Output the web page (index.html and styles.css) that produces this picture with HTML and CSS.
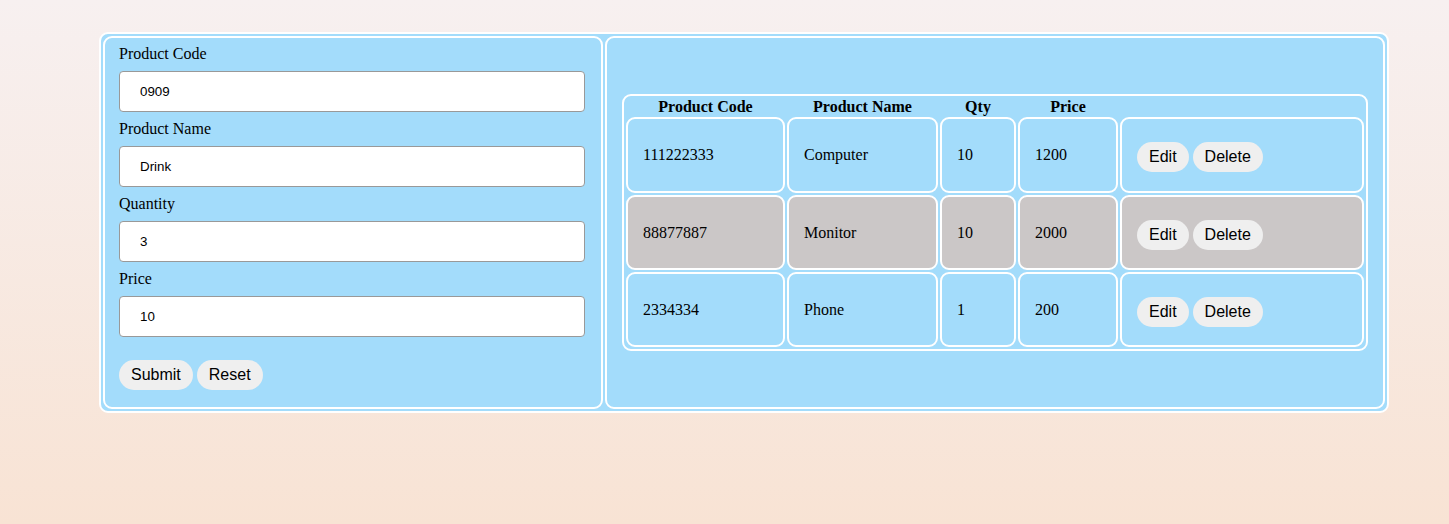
FILE: index.html
```html
<!DOCTYPE html>
<html>
<head>
<meta charset="utf-8">
<title>Products</title>
<link rel="stylesheet" href="styles.css">
</head>
<body>
<div class="wrap">
  <form class="panel form-panel">
    <label class="lbl">Product Code</label>
    <input class="field" type="text" value="0909">
    <label class="lbl">Product Name</label>
    <input class="field" type="text" value="Drink">
    <label class="lbl">Quantity</label>
    <input class="field" type="text" value="3">
    <label class="lbl">Price</label>
    <input class="field" type="text" value="10">
    <div class="actions">
      <button type="button" class="btn">Submit</button>
      <button type="button" class="btn">Reset</button>
    </div>
  </form>
  <div class="panel table-panel">
    <table class="grid">
      <thead>
        <tr>
          <th class="c1">Product Code</th>
          <th class="c2">Product Name</th>
          <th class="c3">Qty</th>
          <th class="c4">Price</th>
          <th class="c5"></th>
        </tr>
      </thead>
      <tbody>
        <tr>
          <td>111222333</td>
          <td>Computer</td>
          <td>10</td>
          <td>1200</td>
          <td><div class="row-btns"><button type="button" class="btn">Edit</button><button type="button" class="btn">Delete</button></div></td>
        </tr>
        <tr class="alt">
          <td>88877887</td>
          <td>Monitor</td>
          <td>10</td>
          <td>2000</td>
          <td><div class="row-btns"><button type="button" class="btn">Edit</button><button type="button" class="btn">Delete</button></div></td>
        </tr>
        <tr>
          <td>2334334</td>
          <td>Phone</td>
          <td>1</td>
          <td>200</td>
          <td><div class="row-btns"><button type="button" class="btn">Edit</button><button type="button" class="btn">Delete</button></div></td>
        </tr>
      </tbody>
    </table>
  </div>
</div>
</body>
</html>
```

FILE: styles.css
```css
html, body {
  margin: 0;
  padding: 0;
}
body {
  min-height: 100vh;
  background: linear-gradient(to bottom, #f7f0f0 0%, #f8e3d4 100%);
  font-family: "Liberation Serif", "Times New Roman", serif;
  font-size: 16px;
  color: #000;
}
.wrap {
  margin: 32px 0 0 99px;
  width: 1290px;
  height: 381px;
  box-sizing: border-box;
  border: 2px solid #fff;
  border-radius: 9px;
  padding: 2px;
  background: #a3dcfb;
  display: flex;
  gap: 2px;
}
.panel {
  box-sizing: border-box;
  border: 2px solid #fff;
  border-radius: 9px;
  background: #a3dcfb;
  height: 100%;
}
.form-panel {
  width: 500px;
  margin: 0;
  padding: 7px 14px 0 14px;
  display: flex;
  flex-direction: column;
  align-items: flex-start;
}
.lbl {
  display: block;
  line-height: 18px;
  height: 18px;
}
.field {
  box-sizing: border-box;
  width: 466px;
  height: 41px;
  margin: 8px 0 8px 0;
  padding: 0 0 0 20px;
  border: 1px solid #999;
  border-radius: 4px;
  background: #fff;
  font-family: "Liberation Sans", Arial, sans-serif;
  font-size: 13.33px;
  color: #000;
}
.actions {
  display: flex;
  gap: 4px;
  margin-top: 15px;
}
.btn {
  font-family: "Liberation Sans", Arial, sans-serif;
  font-size: 16px;
  line-height: 18px;
  height: 30px;
  padding: 0 12px;
  border: none;
  border-radius: 15px;
  background: #efefef;
  color: #000;
}
.table-panel {
  width: 780px;
  display: flex;
  align-items: center;
  justify-content: center;
}
.grid {
  border-collapse: separate;
  border-spacing: 2px;
  border: 2px solid #fff;
  border-radius: 9px;
  table-layout: fixed;
}
.grid th {
  font-weight: bold;
  line-height: 17px;
  height: 17px;
  padding: 0;
  text-align: center;
}
.grid th.c1 { width: 159px; }
.grid th.c2 { width: 151px; }
.grid th.c3 { width: 76px; }
.grid th.c4 { width: 100px; }
.grid th.c5 { width: 244px; }
.grid td {
  box-sizing: border-box;
  height: 75px;
  border: 2px solid #fff;
  border-radius: 9px;
  padding: 0 15px 0 15px;
  vertical-align: middle;
  text-align: left;
  line-height: 18px;
}
.grid tbody tr:first-child td {
  height: 76px;
}
.grid tr.alt td {
  background: #cbc7c7;
}
.row-btns {
  display: flex;
  gap: 4px;
  margin-top: 4px;
}
```
